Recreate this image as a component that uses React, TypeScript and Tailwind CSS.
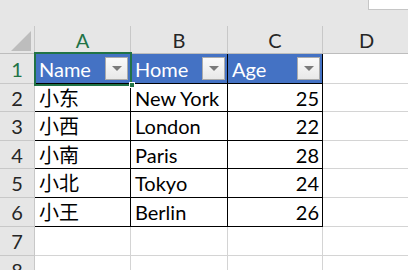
import React from "react";

const rows = [
  { name: "小东", home: "New York", age: 25 },
  { name: "小西", home: "London", age: 22 },
  { name: "小南", home: "Paris", age: 28 },
  { name: "小北", home: "Tokyo", age: 24 },
  { name: "小王", home: "Berlin", age: 26 },
];

const rowHeights = ["h-[30px]", "h-[28px]", "h-[29px]", "h-[28px]", "h-[29px]", "h-[29px]", "h-[29px]", "h-[29px]"];

function Dropdown() {
  return (
    <div className="ml-auto mr-[2px] w-[23px] h-[23px] border border-[#ababab] bg-gradient-to-b from-[#fafafa] to-[#e8e8e8] flex items-center justify-center">
      <svg width="10" height="5" viewBox="0 0 10 5">
        <path d="M0 0 L10 0 L5 5 Z" fill="#7a7a7a" />
      </svg>
    </div>
  );
}

function RowHead({ n, h, active }: { n: number; h: string; active?: boolean }) {
  return (
    <div
      className={`${h} w-[35px] shrink-0 border-r border-b border-[#c8c8c8] bg-[#e6e6e6] flex items-center justify-center text-[20px] ${
        active ? "text-[#217346]" : "text-[#262626]"
      }`}
    >
      {n}
    </div>
  );
}

export default function App() {
  return (
    <div className="relative w-[408px] h-[270px] overflow-hidden bg-white font-['Lato','Noto_Sans_CJK_SC',sans-serif]">
      {/* formula bar strip */}
      <div className="h-[26px] bg-[#e6e6e6] flex justify-end">
        <div className="w-[40px] h-[10px] bg-white border-l border-b border-[#c6c6c6]" />
      </div>

      {/* column headers */}
      <div className="flex h-[28px] bg-[#e6e6e6] border-b border-[#bdbdbd]">
        <div className="w-[35px] shrink-0 border-r border-[#c8c8c8] flex items-end justify-end pr-[3px] pb-[2px]">
          <svg width="20" height="20" viewBox="0 0 20 20">
            <path d="M20 0 L20 20 L0 20 Z" fill="#bdbdbd" />
          </svg>
        </div>
        <div className="w-[96px] shrink-0 border-r border-[#c8c8c8] flex items-center justify-center text-[20px] text-[#217346]">A</div>
        <div className="w-[97px] shrink-0 border-r border-[#c8c8c8] flex items-center justify-center text-[20px] text-[#262626]">B</div>
        <div className="w-[95px] shrink-0 border-r border-[#c8c8c8] flex items-center justify-center text-[20px] text-[#262626]">C</div>
        <div className="flex-1 flex items-center justify-center text-[20px] text-[#262626] pl-[2px]">D</div>
      </div>

      {/* row 1: table header */}
      <div className="flex">
        <RowHead n={1} h={rowHeights[0]} active />
        {["Name", "Home", "Age"].map((t, i) => (
          <div
            key={t}
            className={`${rowHeights[0]} ${
              i === 0 ? "w-[96px]" : i === 1 ? "w-[97px]" : "w-[95px]"
            } shrink-0 bg-[#4472c4] border-r border-b border-black flex items-center pl-[4px] text-white text-[20px]`}
          >
            {t}
            <Dropdown />
          </div>
        ))}
        <div className={`${rowHeights[0]} flex-1 border-b border-[#d4d4d4]`} />
      </div>

      {/* data rows */}
      {rows.map((r, idx) => {
        const h = rowHeights[idx + 1];
        return (
          <div key={r.name} className="flex">
            <RowHead n={idx + 2} h={h} />
            <div className={`${h} w-[96px] shrink-0 border-r border-b border-black flex items-center pl-[4px] text-[20px] text-black`}>
              {r.name}
            </div>
            <div className={`${h} w-[97px] shrink-0 border-r border-b border-black flex items-center pl-[4px] text-[20px] text-black`}>
              {r.home}
            </div>
            <div className={`${h} w-[95px] shrink-0 border-r border-b border-black flex items-center justify-end pr-[3px] text-[20px] text-black`}>
              {r.age}
            </div>
            <div className={`${h} flex-1 border-b border-[#d4d4d4]`} />
          </div>
        );
      })}

      {/* empty rows */}
      {[7, 8].map((n, i) => {
        const h = rowHeights[6 + i];
        return (
          <div key={n} className="flex">
            <RowHead n={n} h={h} />
            <div className={`${h} w-[96px] shrink-0 border-r border-b border-[#d4d4d4]`} />
            <div className={`${h} w-[97px] shrink-0 border-r border-b border-[#d4d4d4]`} />
            <div className={`${h} w-[95px] shrink-0 border-r border-b border-[#d4d4d4]`} />
            <div className={`${h} flex-1 border-b border-[#d4d4d4]`} />
          </div>
        );
      })}

      {/* active cell selection */}
      <div className="absolute left-[34px] top-[52px] w-[98px] h-[34px] border-2 border-[#217346]" />
      <div className="absolute left-[129px] top-[82px] w-[6px] h-[6px] bg-[#217346] border border-white" />
    </div>
  );
}
